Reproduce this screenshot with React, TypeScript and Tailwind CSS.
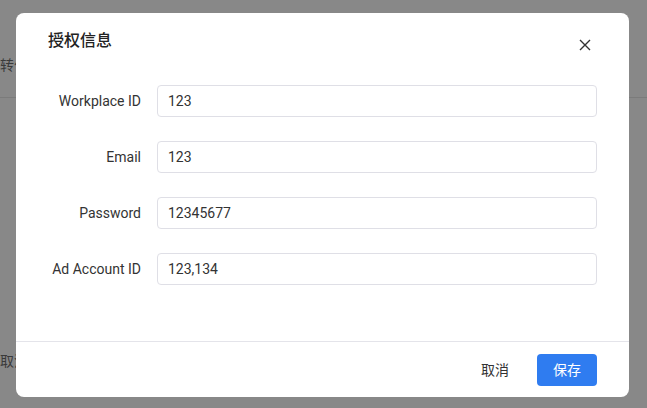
import React from 'react';

const fields = [
  { label: 'Workplace ID', value: '123' },
  { label: 'Email', value: '123' },
  { label: 'Password', value: '12345677' },
  { label: 'Ad Account ID', value: '123,134' },
];

const font = { fontFamily: 'Roboto, "Noto Sans CJK SC", sans-serif' };

export default function App() {
  return (
    <div className="relative h-[408px] w-[647px] overflow-hidden bg-[#888888]" style={font}>
      {/* Page behind the mask */}
      <div className="flex h-[98px] flex-col border-b border-[#7b7b7b]">
        <div className="mt-[55px] text-sm leading-5 text-[#3a3a3a]">转化</div>
      </div>
      <div className="mt-[253px] text-sm leading-5 text-[#3a3a3a]">取消</div>

      {/* Dialog */}
      <div className="absolute left-[16px] top-[13px] flex h-[384px] w-[613px] flex-col rounded-lg bg-white">
        <div className="flex items-start justify-between pl-8 pr-[38px] pt-4">
          <h2 className="text-base font-medium leading-6 text-[#222]">授权信息</h2>
          <button className="mt-[10px] text-[#333]">
            <svg width="12" height="12" viewBox="0 0 12 12" fill="none" stroke="currentColor" strokeWidth="1.4">
              <path d="M1 1L11 11M11 1L1 11" />
            </svg>
          </button>
        </div>

        <div className="mt-8 flex flex-col gap-6 pl-8 pr-8">
          {fields.map((f) => (
            <div key={f.label} className="flex h-8 items-center gap-4">
              <label className="w-[93px] text-right text-sm text-[#333]">{f.label}</label>
              <input
                readOnly
                value={f.value}
                className="h-8 flex-1 rounded border border-[#dfdfe6] px-[10px] text-sm text-[#333] outline-none"
                style={font}
              />
            </div>
          ))}
        </div>

        <div className="flex-1" />

        <div className="flex h-[56px] items-center justify-end gap-3 border-t border-[#e4e4ea] pr-8">
          <button className="h-8 w-[60px] rounded text-sm text-[#333]">取消</button>
          <button className="h-8 w-[60px] rounded bg-[#2f7cf0] text-sm text-white">保存</button>
        </div>
      </div>
    </div>
  );
}
